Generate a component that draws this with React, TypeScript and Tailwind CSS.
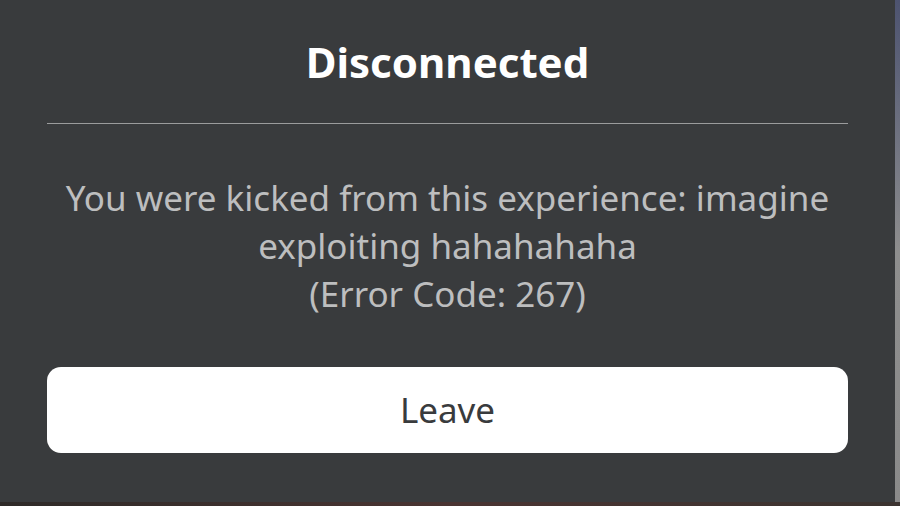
export default function App() {
  return (
    <div className="flex h-[506px] w-[900px] flex-col bg-gradient-to-b from-[#4d5370] via-[#8e8e8e] to-[#8a8a8a]">
      <div className="flex flex-1">
        <div
          className="flex w-[895px] flex-col bg-[#393b3d] px-[47px]"
          style={{ fontFamily: '"Noto Sans", "Open Sans", sans-serif' }}
        >
          <div className="flex h-[123px] items-center justify-center">
            <h1 className="text-[42px] font-bold text-white">Disconnected</h1>
          </div>
          <div className="h-px bg-[#9b9c9d]" />
          <p className="mt-[50px] text-center text-[35px] leading-[48px] text-[#bdbebf]">
            You were kicked from this experience: imagine exploiting hahahahaha
            <br />
            (Error Code: 267)
          </p>
          <button className="mt-auto mb-[49px] flex h-[86px] items-center justify-center rounded-[14px] bg-white text-[35px] text-[#393b3d]">
            Leave
          </button>
        </div>
        <div className="flex-1" />
      </div>
      <div className="h-[4px] bg-gradient-to-r from-[#2e2a28] via-[#4a3432] to-[#3b3330]" />
    </div>
  );
}
